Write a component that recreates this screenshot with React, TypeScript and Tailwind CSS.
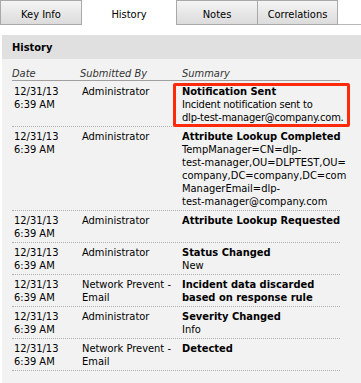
import React from "react";

type Entry = {
  by: string[];
  title: string[];
  lines: string[];
  flagged?: boolean;
};

const ENTRIES: Entry[] = [
  {
    by: ["Administrator"],
    title: ["Notification Sent"],
    lines: ["Incident notification sent to", "dlp-test-manager@company.com."],
    flagged: true,
  },
  {
    by: ["Administrator"],
    title: ["Attribute Lookup Completed"],
    lines: [
      "TempManager=CN=dlp-",
      "test-manager,OU=DLPTEST,OU=",
      "company,DC=company,DC=com",
      "ManagerEmail=dlp-",
      "test-manager@company.com",
    ],
  },
  { by: ["Administrator"], title: ["Attribute Lookup Requested"], lines: [] },
  { by: ["Administrator"], title: ["Status Changed"], lines: ["New"] },
  {
    by: ["Network Prevent -", "Email"],
    title: ["Incident data discarded", "based on response rule"],
    lines: [],
  },
  { by: ["Administrator"], title: ["Severity Changed"], lines: ["Info"] },
  { by: ["Network Prevent -", "Email"], title: ["Detected"], lines: [] },
];

const TABS = [
  { label: "Key Info", w: "w-[82px]" },
  { label: "History", w: "w-[95px]", active: true },
  { label: "Notes", w: "w-[82px]" },
  { label: "Correlations", w: "w-[81px]" },
];

function Tabs() {
  return (
    <div className="flex h-[25px]">
      {TABS.map((t) =>
        t.active ? (
          <div
            key={t.label}
            className={`${t.w} h-[25px] bg-white border-r border-[#d4d4d4] text-center pt-[8px]`}
          >
            {t.label}
          </div>
        ) : (
          <div
            key={t.label}
            className={`${t.w} h-[25px] border border-[#a9a9a9] -ml-px first:ml-0 bg-gradient-to-b from-[#f4f4f4] to-[#dcdcdc] text-center pt-[7px]`}
          >
            {t.label}
          </div>
        )
      )}
      <div className="flex-1 border-b border-[#b8b8b8]" />
    </div>
  );
}

function Row({ e, first }: { e: Entry; first: boolean }) {
  return (
    <div
      className={`relative grid grid-cols-[68px_101px_1fr] border-b border-dotted border-[#b0b0b0] ${
        first ? "pt-[4px] pb-[2px]" : "pt-[3px] pb-[2px]"
      }`}
    >
      <div className="pl-[2px] whitespace-nowrap">
        <div>12/31/13</div>
        <div>6:39 AM</div>
      </div>
      <div className="pl-[2px] whitespace-nowrap">
        {e.by.map((l) => (
          <div key={l}>{l}</div>
        ))}
      </div>
      <div className="pl-[1px] whitespace-nowrap">
        {e.title.map((l) => (
          <div key={l} className="font-bold">
            {l}
          </div>
        ))}
        {e.lines.map((l) => (
          <div key={l} className={e.flagged ? "tracking-[-0.2px]" : ""}>
            {l}
          </div>
        ))}
      </div>
      {e.flagged && (
        <div className="absolute left-[161px] top-[2px] w-[177px] h-[44px] border-[3px] border-[#ff2a0a] rounded-[2px]" />
      )}
    </div>
  );
}

export default function App() {
  return (
    <div
      className="w-[361px] h-[383px] overflow-hidden bg-white text-[11px] leading-[13px] text-black"
      style={{ fontFamily: '"DejaVu Sans Condensed", "DejaVu Sans", sans-serif' }}
    >
      <Tabs />
      <div className="mt-[10px] ml-[2px] h-[360px] bg-[#f2f2f2]">
        <div className="h-[24px] bg-[#e0e0e0] flex items-center pl-[10px] font-bold">
          History
        </div>
        <div className="px-[10px] w-[348px]">
          <div className="grid grid-cols-[68px_101px_1fr] pt-[8px] border-b border-[#a0a0a0] italic text-[#333]">
            <div>Date</div>
            <div>Submitted By</div>
            <div className="pl-[1px]">Summary</div>
          </div>
          {ENTRIES.map((e, i) => (
            <Row key={i} e={e} first={i === 0} />
          ))}
        </div>
      </div>
    </div>
  );
}
